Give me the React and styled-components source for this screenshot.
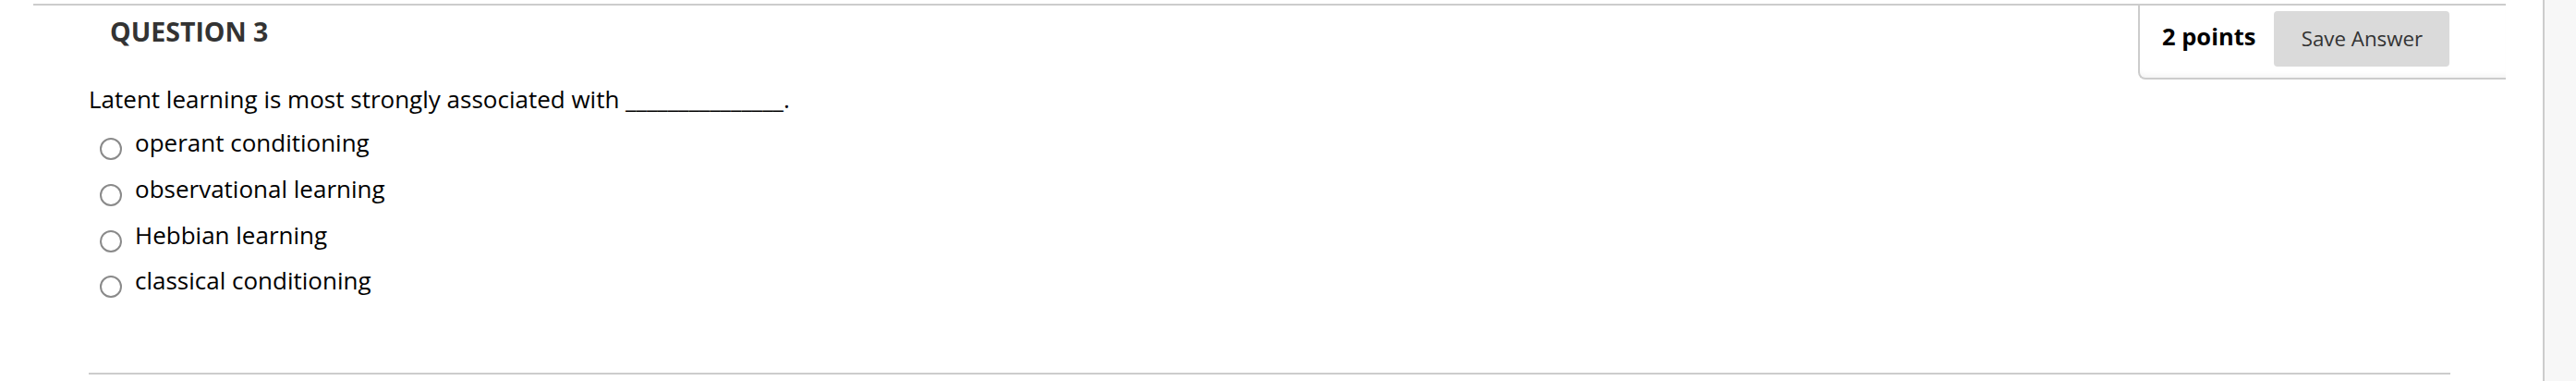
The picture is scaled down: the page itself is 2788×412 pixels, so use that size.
import React from 'react'
import styled, { createGlobalStyle } from 'styled-components'

const GlobalStyle = createGlobalStyle`
  html, body {
    margin: 0;
    padding: 0;
    background: #fff;
  }
  body {
    font-family: "Open Sans", "Liberation Sans", sans-serif;
    color: #000;
  }
`

const options = [
  'operant conditioning',
  'observational learning',
  'Hebbian learning',
  'classical conditioning',
]

export default function App() {
  return (
    <>
      <GlobalStyle />
      <Page>
        <Main>
          <QuestionBlock>
            <Header>
              <Title>QUESTION 3</Title>
              <PointsBox>
                <Points>2 points</Points>
                <SaveButton type='button'>Save Answer</SaveButton>
              </PointsBox>
            </Header>
            <Body>
              <Prompt>Latent learning is most strongly associated with _______________.</Prompt>
              <Options>
                {options.map((label) => (
                  <Option key={label}>
                    <Radio type='radio' name='q3' />
                    <span>{label}</span>
                  </Option>
                ))}
              </Options>
              <Separator />
            </Body>
          </QuestionBlock>
        </Main>
        <Sidebar />
      </Page>
    </>
  )
}

const Page = styled.div`
  display: flex;
  height: 412px;
  overflow: hidden;
`

const Main = styled.div`
  flex: 1;
  padding-top: 4px;
  border-right: 2px solid #cccccc;
  background: #fff;
`

const Sidebar = styled.div`
  width: 34px;
  background: #f7f7f7;
`

const QuestionBlock = styled.div`
  margin: 0 40px 0 36px;
  border-top: 2px solid #cccccc;
`

const Header = styled.div`
  display: flex;
  justify-content: space-between;
  align-items: flex-start;
`

const Title = styled.h2`
  margin: 9px 0 0 83px;
  font-size: 28.5px;
  line-height: 38px;
  font-weight: 700;
  color: #333;
`

const PointsBox = styled.div`
  box-sizing: border-box;
  width: 398px;
  height: 80px;
  display: flex;
  align-items: flex-start;
  gap: 20px;
  padding: 6px 60px 12px 24px;
  border-left: 2px solid #cccccc;
  border-bottom: 2px solid #cccccc;
  border-bottom-left-radius: 8px;
  box-shadow: inset 0 -6px 6px -4px #f2f2f2;
`

const Points = styled.span`
  font-size: 25.5px;
  line-height: 54px;
  font-weight: 700;
  color: #000;
  white-space: nowrap;
`

const SaveButton = styled.button`
  box-sizing: border-box;
  width: 190px;
  height: 60px;
  padding: 0 0 2px;
  border: none;
  border-radius: 4px;
  background: #dadada;
  color: #333;
  font-family: inherit;
  font-size: 22.3px;
  cursor: pointer;
`

const Body = styled.div`
  padding: 0 60px;
`

const Prompt = styled.p`
  margin: 4px 0 0;
  font-size: 26px;
  line-height: 34px;
`

const Options = styled.div`
  margin-top: 6px;
  display: flex;
  flex-direction: column;
`

const Option = styled.label`
  display: flex;
  align-items: flex-start;
  height: 49.8px;
  padding-left: 12px;
  font-size: 26px;
  line-height: 49.8px;
`

const Radio = styled.input`
  appearance: none;
  box-sizing: border-box;
  width: 24px;
  height: 24px;
  margin: 19px 14px 0 0;
  border: 2px solid #8a8a8a;
  border-radius: 50%;
  background: #fff;
  flex-shrink: 0;
`

const Separator = styled.div`
  margin-top: 74px;
  border-top: 2px solid #cccccc;
`
